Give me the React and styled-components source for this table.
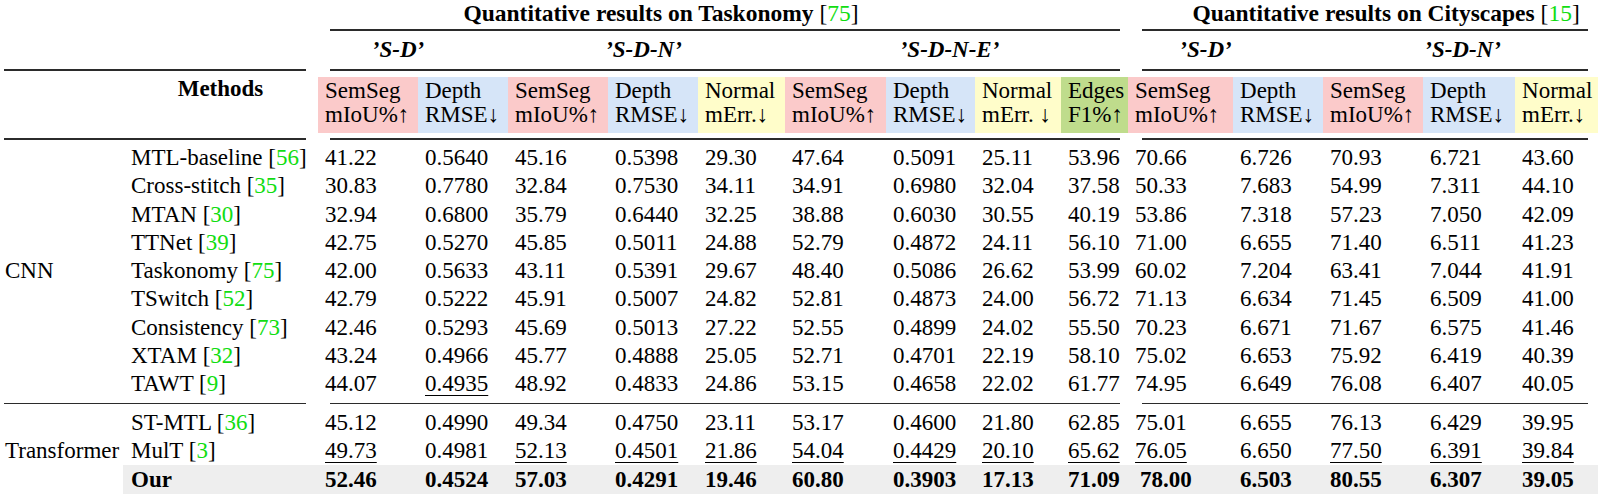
import React from "react";
import styled, { createGlobalStyle } from "styled-components";

const GlobalStyle = createGlobalStyle`
  html, body {
    margin: 0;
    padding: 0;
    background: #ffffff;
  }
  body {
    font-family: "Liberation Serif", "Times New Roman", serif;
    color: #000;
  }
`;

// column widths in px (group, methods, then 14 metric columns)
const COLS = [123, 195, 100, 90, 100, 90, 87, 101, 89, 86, 67, 105, 90, 100, 92, 83];

const palette = {
  seg: "#fbcaca",
  dep: "#d6e5f8",
  nor: "#fffdca",
  edg: "#bfdc8c",
};

const HEAD = [
  ["seg", "SemSeg", "mIoU%↑"],
  ["dep", "Depth", "RMSE↓"],
  ["seg", "SemSeg", "mIoU%↑"],
  ["dep", "Depth", "RMSE↓"],
  ["nor", "Normal", "mErr.↓"],
  ["seg", "SemSeg", "mIoU%↑"],
  ["dep", "Depth", "RMSE↓"],
  ["nor", "Normal", "mErr. ↓"],
  ["edg", "Edges", "F1%↑"],
  ["seg", "SemSeg", "mIoU%↑"],
  ["dep", "Depth", "RMSE↓"],
  ["seg", "SemSeg", "mIoU%↑"],
  ["dep", "Depth", "RMSE↓"],
  ["nor", "Normal", "mErr.↓"],
];

// "_x" marks an underlined (second best) value
const CNN_ROWS = [
  ["MTL-baseline", 56, "41.22 0.5640 45.16 0.5398 29.30 47.64 0.5091 25.11 53.96 70.66 6.726 70.93 6.721 43.60"],
  ["Cross-stitch", 35, "30.83 0.7780 32.84 0.7530 34.11 34.91 0.6980 32.04 37.58 50.33 7.683 54.99 7.311 44.10"],
  ["MTAN", 30, "32.94 0.6800 35.79 0.6440 32.25 38.88 0.6030 30.55 40.19 53.86 7.318 57.23 7.050 42.09"],
  ["TTNet", 39, "42.75 0.5270 45.85 0.5011 24.88 52.79 0.4872 24.11 56.10 71.00 6.655 71.40 6.511 41.23"],
  ["Taskonomy", 75, "42.00 0.5633 43.11 0.5391 29.67 48.40 0.5086 26.62 53.99 60.02 7.204 63.41 7.044 41.91"],
  ["TSwitch", 52, "42.79 0.5222 45.91 0.5007 24.82 52.81 0.4873 24.00 56.72 71.13 6.634 71.45 6.509 41.00"],
  ["Consistency", 73, "42.46 0.5293 45.69 0.5013 27.22 52.55 0.4899 24.02 55.50 70.23 6.671 71.67 6.575 41.46"],
  ["XTAM", 32, "43.24 0.4966 45.77 0.4888 25.05 52.71 0.4701 22.19 58.10 75.02 6.653 75.92 6.419 40.39"],
  ["TAWT", 9, "44.07 _0.4935 48.92 0.4833 24.86 53.15 0.4658 22.02 61.77 74.95 6.649 76.08 6.407 40.05"],
];

const TRANS_ROWS = [
  ["ST-MTL", 36, "45.12 0.4990 49.34 0.4750 23.11 53.17 0.4600 21.80 62.85 75.01 6.655 76.13 6.429 39.95"],
  ["MulT", 3, "_49.73 0.4981 _52.13 _0.4501 _21.86 _54.04 _0.4429 _20.10 _65.62 _76.05 6.650 _77.50 _6.391 _39.84"],
];

const OUR = "52.46 0.4524 57.03 0.4291 19.46 60.80 0.3903 17.13 71.09 78.00 6.503 80.55 6.307 39.05";

const Page = styled.div`
  padding: 0;
`;

const Table = styled.table`
  border-collapse: collapse;
  border-spacing: 0;
  table-layout: fixed;
  width: 1598px;
  font-family: "Liberation Serif", "Times New Roman", serif;
  font-size: 23px;
  color: #000;
`;

const Row = styled.tr`
  height: ${(p) => p.$h}px;
`;

const TitleCell = styled.th`
  padding: 0 ${(p) => p.$pr || 0}px 0 ${(p) => p.$pl || 0}px;
  font-size: 23.5px;
  font-weight: 700;
  text-align: center;
  white-space: nowrap;
  line-height: 26px;
  vertical-align: middle;
`;

const SubCell = styled.th`
  padding: 0 ${(p) => p.$pr || 0}px 0 ${(p) => p.$pl || 0}px;
  font-weight: 700;
  font-style: italic;
  text-align: center;
  white-space: nowrap;
  line-height: 28px;
  vertical-align: middle;
`;

const RuleCell = styled.td`
  padding: ${(p) => p.$top}px ${(p) => p.$r}px 0 ${(p) => p.$l}px;
  vertical-align: top;
`;

const Line = styled.div`
  height: 1.5px;
  background: #2b2b2b;
`;

const MethodsHead = styled.th`
  padding: 5px 0 0;
  vertical-align: top;
  text-align: center;
  font-weight: 700;
  line-height: 24px;
`;

const HeadTd = styled.th`
  padding: 5px 0 2px;
  vertical-align: top;
  font-weight: 400;
  text-align: left;
`;

const HeadBox = styled.div`
  box-sizing: border-box;
  height: 56px;
  padding: 2px 0 0 7px;
  background: ${(p) => palette[p.$kind]};
  line-height: 24px;
  white-space: nowrap;
`;

const GroupCell = styled.td`
  padding: 0 0 0 5px;
  vertical-align: middle;
  white-space: nowrap;
  line-height: 28px;
`;

const Cell = styled.td`
  padding: 0 0 0 ${(p) => p.$pad ?? 7}px;
  vertical-align: middle;
  white-space: nowrap;
  line-height: 28px;
  text-align: left;
  font-weight: ${(p) => (p.$bold ? 700 : 400)};
  background: ${(p) => (p.$shade ? "#eeeeee" : "transparent")};
`;

const U = styled.span`
  text-decoration: underline;
  text-decoration-thickness: 1px;
  text-underline-offset: 4px;
`;

const Ref = styled.span`
  color: #11dd11;
`;

const Bracket = styled.span`
  font-weight: 400;
`;

function Cite({ n }) {
  return (
    <Bracket>
      [<Ref>{n}</Ref>]
    </Bracket>
  );
}

function RuleRow({ h, top, first = true }) {
  return (
    <Row $h={h}>
      <RuleCell colSpan={2} $top={top} $l={4} $r={12}>
        {first && <Line />}
      </RuleCell>
      <RuleCell colSpan={9} $top={top} $l={12} $r={8}>
        <Line />
      </RuleCell>
      <RuleCell colSpan={5} $top={top} $l={14} $r={10}>
        <Line />
      </RuleCell>
    </Row>
  );
}

function Value({ v }) {
  if (v.startsWith("_")) return <U>{v.slice(1)}</U>;
  return v;
}

function DataRow({ group, name, cite, values }) {
  return (
    <Row $h={28.3}>
      {group}
      <Cell $pad={8}>
        {name} <Cite n={cite} />
      </Cell>
      {values.split(" ").map((v, i) => (
        <Cell key={i}>
          <Value v={v} />
        </Cell>
      ))}
    </Row>
  );
}

export default function App() {
  return (
    <Page>
      <GlobalStyle />
      <Table>
        <colgroup>
          {COLS.map((w, i) => (
            <col key={i} style={{ width: w }} />
          ))}
        </colgroup>
        <thead>
          <Row $h={26}>
            <th colSpan={2} />
            <TitleCell colSpan={9} $pr={124}>
              Quantitative results on Taskonomy <Cite n={75} />
            </TitleCell>
            <TitleCell colSpan={5} $pl={46}>
              Quantitative results on Cityscapes <Cite n={15} />
            </TitleCell>
          </Row>
          <RuleRow h={7} top={3} first={false} />
          <Row $h={34}>
            <th colSpan={2} />
            <SubCell colSpan={2} $pr={30}>’S-D’</SubCell>
            <SubCell colSpan={3} $pr={6}>’S-D-N’</SubCell>
            <SubCell colSpan={4} $pr={14}>’S-D-N-E’</SubCell>
            <SubCell colSpan={2} $pr={40}>’S-D’</SubCell>
            <SubCell colSpan={3} $pl={4}>’S-D-N’</SubCell>
          </Row>
          <RuleRow h={5} top={2} />
          <Row $h={63}>
            <th />
            <MethodsHead>Methods</MethodsHead>
            {HEAD.map(([kind, a, b], i) => (
              <HeadTd key={i}>
                <HeadBox $kind={kind}>
                  {a}
                  <br />
                  {b}
                </HeadBox>
              </HeadTd>
            ))}
          </Row>
          <RuleRow h={8.85} top={3} />
        </thead>
        <tbody>
          {CNN_ROWS.map(([name, cite, values], i) => (
            <DataRow
              key={name}
              name={name}
              cite={cite}
              values={values}
              group={i === 0 ? <GroupCell rowSpan={CNN_ROWS.length}>CNN</GroupCell> : null}
            />
          ))}
          <RuleRow h={10.3} top={4.45} />
          {TRANS_ROWS.map(([name, cite, values], i) => (
            <DataRow
              key={name}
              name={name}
              cite={cite}
              values={values}
              group={i === 0 ? <GroupCell rowSpan={3}>Transformer</GroupCell> : null}
            />
          ))}
          <Row $h={28.3}>
            <Cell $pad={8} $bold $shade>
              Our
            </Cell>
            {OUR.split(" ").map((v, i) => (
              <Cell key={i} $bold $shade $pad={i === 9 ? 12 : 7}>
                {v}
              </Cell>
            ))}
          </Row>
        </tbody>
      </Table>
    </Page>
  );
}
